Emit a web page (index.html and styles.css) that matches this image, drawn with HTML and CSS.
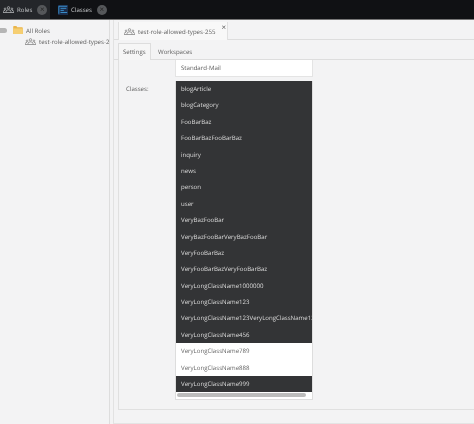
FILE: index.html
```html
<!DOCTYPE html>
<html>
<head>
<meta charset="utf-8">
<title>Roles</title>
<link rel="stylesheet" href="styles.css">
</head>
<body>
<svg class="defs" width="0" height="0"><symbol id="role" viewBox="0 0 16 10"><g fill="none" stroke="currentColor" stroke-width="1"><circle cx="8" cy="2.5" r="1.7"/><path d="M4.5 9V7.5Q4.500 5.500 8 5.500T11.500 7.500V9"/><circle cx="3" cy="4" r="1.200"/><path d="M.5 9V7.800Q.5 6.300 3 6.300"/><circle cx="13" cy="4" r="1.200"/><path d="M15.500 9V7.800Q15.500 6.300 13 6.300"/></g><path d="M0 9h16v1H0z" fill="currentColor"/></symbol></svg>
<header class="topbar">
  <div class="toptab active">
    <svg class="topicon"><use href="#role"/></svg>
    <span class="toplabel">Roles</span>
    <span class="closer">×</span>
  </div>
  <div class="toptab second">
    <svg class="classicon" viewBox="0 0 12 12"><path d="M0 0h12v12H0z" fill="#1a2c4a"/><path d="M1 1.500h10M1 1.500v9M3 4h7M3 6.500h4M3 9h8" stroke="#3f9fe0" fill="none"/></svg>
    <span class="toplabel">Classes</span>
    <span class="closer">×</span>
  </div>
</header>
<div class="workspace">
  <aside class="tree">
    <div class="tree-root">
      <span class="collapse"></span>
      <svg class="folder" viewBox="0 0 12 10"><path d="M0 1q0-1 1-1h3l1 1.500h6q1 0 1 1V10H0z" fill="#eab54a"/><path d="M0 3h12v7H0z" fill="#f6cf72"/></svg>
      <span>All Roles</span>
    </div>
    <div class="tree-child">
      <svg class="roleicon"><use href="#role"/></svg>
      <span>test-role-allowed-types-255</span>
    </div>
  </aside>
  <main class="main">
    <div class="doctabs">
      <div class="doctab">
        <svg class="roleicon"><use href="#role"/></svg>
        <span>test-role-allowed-types-255</span>
        <span class="docclose">×</span>
      </div>
    </div>
    <div class="subtabs">
      <div class="subtab current">Settings</div>
      <div class="subtab">Workspaces</div>
    </div>
    <div class="panel">
      <div class="formrow">
        <div class="spacer"></div>
        <div class="selectbox">Standard-Mail</div>
      </div>
      <div class="formrow classes">
        <label class="formlabel">Classes:</label>
        <div class="listbox">
          <div class="listinner">
            <div class="opt sel">blogArticle</div>
            <div class="opt sel">blogCategory</div>
            <div class="opt sel">FooBarBaz</div>
            <div class="opt sel">FooBarBazFooBarBaz</div>
            <div class="opt sel">inquiry</div>
            <div class="opt sel">news</div>
            <div class="opt sel">person</div>
            <div class="opt sel">user</div>
            <div class="opt sel">VeryBazFooBar</div>
            <div class="opt sel">VeryBazFooBarVeryBazFooBar</div>
            <div class="opt sel">VeryFooBarBaz</div>
            <div class="opt sel">VeryFooBarBazVeryFooBarBaz</div>
            <div class="opt sel">VeryLongClassName1000000</div>
            <div class="opt sel">VeryLongClassName123</div>
            <div class="opt sel">VeryLongClassName123VeryLongClassName123</div>
            <div class="opt sel">VeryLongClassName456</div>
            <div class="opt">VeryLongClassName789</div>
            <div class="opt">VeryLongClassName888</div>
            <div class="opt sel">VeryLongClassName999</div>
          </div>
          <div class="hscroll"><div class="thumb"></div></div>
        </div>
      </div>
    </div>
  </main>
</div>
</body>
</html>
```
FILE: styles.css
```css
* { box-sizing: border-box; }
html { background: #f3f3f4; }
html, body { margin: 0; height: 100%; overflow: hidden; }
body {
  width: 474px;
  height: 424px;
  background: #f3f3f4;
  font-family: "Open Sans", sans-serif;
  font-size: 6.1px;
  text-rendering: geometricPrecision;
  color: #5c5c5c;
  display: flex;
  flex-direction: column;
  filter: blur(0.35px);
}
.defs { position: absolute; }

.topbar {
  height: 20px;
  flex: none;
  background: #101114;
  border-bottom: 1px solid #777;
  display: flex;
  color: #c8cacc;
}
.toptab {
  display: flex;
  align-items: center;
  height: 19px;
  padding-left: 3px;
}
.toptab.active { width: 50px; background: #24262a; }
.second { margin-left: 5px; }
.topicon { width: 11px; height: 7px; margin-right: 3px; color: #c8cacc; }
.classicon { width: 10px; height: 10px; margin-right: 3px; }
.closer {
  width: 10px;
  height: 10px;
  margin-left: 5px;
  border-radius: 50%;
  background: #55575a;
  color: #222;
  font-size: 8px;
  line-height: 10px;
  text-align: center;
}

.workspace { flex: 1; display: flex; min-height: 0; }

.tree {
  width: 110px;
  flex: none;
  overflow: hidden;
  white-space: nowrap;
  border-right: 1px solid #ddd;
  padding-top: 4px;
}
.tree-root { display: flex; align-items: center; height: 12px; margin-left: -3px; }
.collapse { width: 10px; height: 5px; border-radius: 3px; background: #b5b5b5; margin-right: 6px; }
.folder { width: 10px; height: 8px; margin-right: 3px; flex: none; }
.tree-child { display: flex; align-items: center; height: 11px; margin-left: 25px; }
.roleicon { width: 11px; height: 7px; margin-right: 3px; flex: none; color: #777; }

.main {
  flex: 1;
  min-width: 0;
  display: flex;
  flex-direction: column;
  border-left: 1px solid #e2e2e2;
  margin-left: 3px;
  padding-bottom: 3px;
  border-bottom: 1px solid #e4e4e4;
}
.doctabs {
  height: 20px;
  flex: none;
  padding: 2px 0 0 4px;
  border-bottom: 1px solid #ddd;
  display: flex;
}
.doctab {
  width: 110px;
  height: 18px;
  display: flex;
  align-items: center;
  padding-left: 5px;
  background: #f8f8f8;
  border-left: 1px solid #e0e0e0;
  border-right: 1px solid #e0e0e0;
  white-space: nowrap;
  position: relative;
}
.docclose { position: absolute; right: 1px; top: 1px; font-size: 8px; line-height: 9px; color: #555; }
.subtabs {
  height: 20px;
  flex: none;
  padding: 3px 0 0 4px;
  border-bottom: 1px solid #ddd;
  display: flex;
}
.subtab { height: 17px; padding: 2px 5px 0; line-height: 13px; }
.subtab.current {
  width: 33px;
  background: #f6f6f6;
  border: 1px solid #ddd;
  border-bottom: 0;
  padding: 1px 0 0 4px;
  margin-right: 2px;
}
.panel {
  flex: 1;
  margin: 0 0 10px 4px;
  padding-right: 160px;
  border: 1px solid #e0e0e0;
  border-top: 0;
  border-right: 0;
  min-height: 0;
  display: flex;
  flex-direction: column;
}
.formrow { display: flex; }
.spacer, .formlabel { width: 56px; flex: none; }
.formlabel { padding: 3px 0 0 7px; line-height: 10px; }
.selectbox {
  width: 138px;
  height: 17px;
  flex: none;
  background: #fff;
  border: 1px solid #e4e4e4;
  border-top: 0;
  line-height: 15px;
  padding-left: 5px;
}
.classes { margin-top: 4px; }
.listbox {
  width: 138px;
  flex: none;
  background: #fff;
  border: 1px solid #ddd;
  border-top: 0;
  overflow: hidden;
}
.listinner { white-space: nowrap; overflow: hidden; }
.opt { height: 16.4px; line-height: 16.4px; padding-left: 5px; color: #666; }
.opt.sel { background: #333436; color: #dcdcdc; }
.hscroll { height: 7px; padding: 1px 6px 1px 1px; }
.thumb { height: 4px; background: #bcbcbc; border-radius: 2px; }
```
